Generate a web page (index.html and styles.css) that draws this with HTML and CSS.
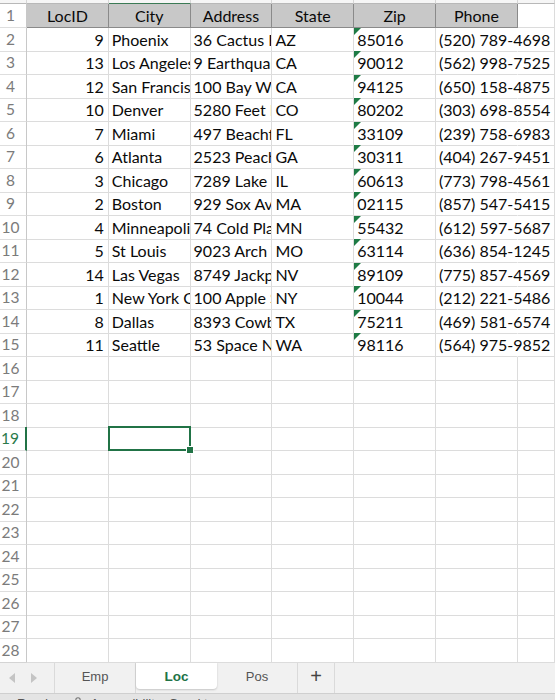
FILE: index.html
```html
<!DOCTYPE html>
<html>
<head>
<meta charset="utf-8">
<link rel="stylesheet" href="styles.css">
</head>
<body>
<div class="app">
  <div class="sheet">
    <div class="row strip">
      <div class="h"></div><div class="c"></div><div class="c sel-col"></div><div class="c"></div><div class="c"></div><div class="c"></div><div class="c"></div><div class="c"></div>
    </div>
    <div class="row hdr">
      <div class="h">1</div><div class="c">LocID</div><div class="c">City</div><div class="c">Address</div><div class="c">State</div><div class="c">Zip</div><div class="c">Phone</div><div class="c blank"></div>
    </div>
    <div class="row"><div class="h">2</div><div class="c n">9</div><div class="c">Phoenix</div><div class="c">36 Cactus Flower Rd</div><div class="c">AZ</div><div class="c z">85016</div><div class="c ovf">(520) 789-4698</div><div class="c"></div></div>
    <div class="row"><div class="h">3</div><div class="c n">13</div><div class="c">Los Angeles</div><div class="c">9 Earthquake Blvd</div><div class="c">CA</div><div class="c z">90012</div><div class="c ovf">(562) 998-7525</div><div class="c"></div></div>
    <div class="row"><div class="h">4</div><div class="c n">12</div><div class="c">San Francisco</div><div class="c">100 Bay Way</div><div class="c">CA</div><div class="c z">94125</div><div class="c ovf">(650) 158-4875</div><div class="c"></div></div>
    <div class="row"><div class="h">5</div><div class="c n">10</div><div class="c">Denver</div><div class="c">5280 Feet High St</div><div class="c">CO</div><div class="c z">80202</div><div class="c ovf">(303) 698-8554</div><div class="c"></div></div>
    <div class="row"><div class="h">6</div><div class="c n">7</div><div class="c">Miami</div><div class="c">497 Beachfront Ave</div><div class="c">FL</div><div class="c z">33109</div><div class="c ovf">(239) 758-6983</div><div class="c"></div></div>
    <div class="row"><div class="h">7</div><div class="c n">6</div><div class="c">Atlanta</div><div class="c">2523 Peachtree St</div><div class="c">GA</div><div class="c z">30311</div><div class="c ovf">(404) 267-9451</div><div class="c"></div></div>
    <div class="row"><div class="h">8</div><div class="c n">3</div><div class="c">Chicago</div><div class="c">7289 Lake Shore Dr</div><div class="c">IL</div><div class="c z">60613</div><div class="c ovf">(773) 798-4561</div><div class="c"></div></div>
    <div class="row"><div class="h">9</div><div class="c n">2</div><div class="c">Boston</div><div class="c">929 Sox Ave</div><div class="c">MA</div><div class="c z">02115</div><div class="c ovf">(857) 547-5415</div><div class="c"></div></div>
    <div class="row"><div class="h">10</div><div class="c n">4</div><div class="c">Minneapolis</div><div class="c">74 Cold Plains Rd</div><div class="c">MN</div><div class="c z">55432</div><div class="c ovf">(612) 597-5687</div><div class="c"></div></div>
    <div class="row"><div class="h">11</div><div class="c n">5</div><div class="c">St Louis</div><div class="c">9023 Arch Way</div><div class="c">MO</div><div class="c z">63114</div><div class="c ovf">(636) 854-1245</div><div class="c"></div></div>
    <div class="row"><div class="h">12</div><div class="c n">14</div><div class="c">Las Vegas</div><div class="c">8749 Jackpot Ln</div><div class="c">NV</div><div class="c z">89109</div><div class="c ovf">(775) 857-4569</div><div class="c"></div></div>
    <div class="row"><div class="h">13</div><div class="c n">1</div><div class="c">New York City</div><div class="c">100 Apple St</div><div class="c">NY</div><div class="c z">10044</div><div class="c ovf">(212) 221-5486</div><div class="c"></div></div>
    <div class="row"><div class="h">14</div><div class="c n">8</div><div class="c">Dallas</div><div class="c">8393 Cowboy Rd</div><div class="c">TX</div><div class="c z">75211</div><div class="c ovf">(469) 581-6574</div><div class="c"></div></div>
    <div class="row"><div class="h">15</div><div class="c n">11</div><div class="c">Seattle</div><div class="c">53 Space Needle Way</div><div class="c">WA</div><div class="c z">98116</div><div class="c ovf">(564) 975-9852</div><div class="c"></div></div>
    <div class="row"><div class="h">16</div><div class="c"></div><div class="c"></div><div class="c"></div><div class="c"></div><div class="c"></div><div class="c"></div><div class="c"></div></div>
    <div class="row"><div class="h">17</div><div class="c"></div><div class="c"></div><div class="c"></div><div class="c"></div><div class="c"></div><div class="c"></div><div class="c"></div></div>
    <div class="row"><div class="h">18</div><div class="c"></div><div class="c"></div><div class="c"></div><div class="c"></div><div class="c"></div><div class="c"></div><div class="c"></div></div>
    <div class="row"><div class="h sel-row">19</div><div class="c"></div><div class="c active"></div><div class="c"></div><div class="c"></div><div class="c"></div><div class="c"></div><div class="c"></div></div>
    <div class="row"><div class="h">20</div><div class="c"></div><div class="c"></div><div class="c"></div><div class="c"></div><div class="c"></div><div class="c"></div><div class="c"></div></div>
    <div class="row"><div class="h">21</div><div class="c"></div><div class="c"></div><div class="c"></div><div class="c"></div><div class="c"></div><div class="c"></div><div class="c"></div></div>
    <div class="row"><div class="h">22</div><div class="c"></div><div class="c"></div><div class="c"></div><div class="c"></div><div class="c"></div><div class="c"></div><div class="c"></div></div>
    <div class="row"><div class="h">23</div><div class="c"></div><div class="c"></div><div class="c"></div><div class="c"></div><div class="c"></div><div class="c"></div><div class="c"></div></div>
    <div class="row"><div class="h">24</div><div class="c"></div><div class="c"></div><div class="c"></div><div class="c"></div><div class="c"></div><div class="c"></div><div class="c"></div></div>
    <div class="row"><div class="h">25</div><div class="c"></div><div class="c"></div><div class="c"></div><div class="c"></div><div class="c"></div><div class="c"></div><div class="c"></div></div>
    <div class="row"><div class="h">26</div><div class="c"></div><div class="c"></div><div class="c"></div><div class="c"></div><div class="c"></div><div class="c"></div><div class="c"></div></div>
    <div class="row"><div class="h">27</div><div class="c"></div><div class="c"></div><div class="c"></div><div class="c"></div><div class="c"></div><div class="c"></div><div class="c"></div></div>
    <div class="row"><div class="h">28</div><div class="c"></div><div class="c"></div><div class="c"></div><div class="c"></div><div class="c"></div><div class="c"></div><div class="c"></div></div>
  </div>
  <div class="tabbar">
    <div class="navs">
      <svg width="10" height="12" viewBox="0 0 10 12"><path d="M8 1 L2 6 L8 11 Z" fill="#c4c4c4"/></svg>
      <svg width="10" height="12" viewBox="0 0 10 12"><path d="M2 1 L8 6 L2 11 Z" fill="#c4c4c4"/></svg>
    </div>
    <div class="tab">Emp</div>
    <div class="tab on">Loc</div>
    <div class="tab">Pos</div>
    <div class="tab add">+</div>
    <div class="rest"></div>
  </div>
  <div class="status">
    <span class="st">Ready</span>
    <svg class="acc" width="14" height="12" viewBox="0 0 14 12"><circle cx="7" cy="4" r="2.2" fill="none" stroke="#777" stroke-width="1.1"/><path d="M2 7 H12" stroke="#777" stroke-width="1.1"/></svg>
    <span class="st">Accessibility: Good to go</span>
  </div>
</div>
</body>
</html>
```

FILE: styles.css
```css
* { box-sizing: border-box; }
html, body { margin: 0; padding: 0; }
body {
  width: 555px;
  height: 700px;
  overflow: hidden;
  background: #fff;
  font-family: Lato, "Open Sans", sans-serif;
}
.app { display: flex; flex-direction: column; height: 700px; }
.sheet { display: flex; flex-direction: column; height: 662px; flex: none; }
.row {
  display: grid;
  grid-template-columns: 27px repeat(6, 81.8px) 1fr;
  height: 23.5px;
  flex: none;
  font-size: 16px;
  line-height: 23px;
  color: #0a0a0a;
}
.row.strip { height: 4px; background: #f6f6f6; }
.strip .h, .strip .c { border-bottom: 1px solid #b8b8b8; border-right: 1px solid #d6d6d6; }
.strip .sel-col { border-bottom: 1px solid #3b7a55; }
.h {
  border-right: 1px solid #c8c8c8;
  border-bottom: 1px solid #dedede;
  color: #7b7b7b;
  text-align: center;
  padding-right: 5px;
  font-size: 15.5px;
}
.h.sel-row { color: #2a7a4b; border-right: 2px solid #217346; }
.c {
  position: relative;
  border-right: 1px solid #dcdcdc;
  border-bottom: 1px solid #dcdcdc;
  padding: 0 3px;
  white-space: nowrap;
  overflow: hidden;
}
.c.n { text-align: right; padding-right: 4px; }
.c.ovf { overflow: visible; border-right-color: transparent; z-index: 1; }
.c.z { padding-left: 3px; }
.c.z::before {
  content: "";
  position: absolute;
  left: 0;
  top: 0;
  width: 0;
  height: 0;
  border-top: 7px solid #1e7b45;
  border-right: 7px solid transparent;
}
.hdr .c {
  background: #c8c8c8;
  border-right: 1px solid #8a8a8a;
  border-bottom: 1px solid #8a8a8a;
  text-align: center;
}
.hdr .c.blank { background: #fff; border-right: 1px solid #dcdcdc; border-bottom: 1px solid #dcdcdc; }
.hdr .h { border-bottom-color: #dedede; }
.c.active { overflow: visible; }
.c.active::after {
  content: "";
  position: absolute;
  left: -1px;
  top: -1px;
  right: -1px;
  bottom: -1px;
  border: 2px solid #217346;
}
.c.active::before {
  content: "";
  position: absolute;
  right: -4px;
  bottom: -4px;
  width: 6px;
  height: 6px;
  background: #217346;
  border: 1px solid #fff;
  z-index: 2;
}
.tabbar {
  display: flex;
  height: 32px;
  flex: none;
  background: #f1f1f1;
  border-top: 1px solid #d4d4d4;
  border-bottom: 1px solid #cfcfcf;
  font-family: "Liberation Sans", Arial, sans-serif;
  font-size: 13px;
  color: #555;
}
.navs {
  width: 55px;
  display: flex;
  align-items: center;
  gap: 12px;
  padding-left: 7px;
  border-right: 1px solid #dadada;
}
.tab {
  width: 81px;
  display: flex;
  align-items: center;
  justify-content: center;
  padding-bottom: 3px;
  border-right: 1px solid #dadada;
}
.tab.on {
  background: #fff;
  color: #217346;
  font-weight: bold;
  font-size: 13.5px;
  margin-top: -1px;
  margin-bottom: 4px;
  border-radius: 0 0 4px 4px;
  box-shadow: 0 1px 2px rgba(0,0,0,0.18);
  border-right: none;
  padding-top: 2px;
  padding-bottom: 0;
}
.tab.add { width: 37px; font-size: 20px; color: #444; padding-bottom: 4px; }
.rest { flex: 1; }
.status {
  flex: none;
  height: 20px;
  background: #e4e4e4;
  display: flex;
  align-items: flex-start;
  gap: 6px;
  padding-left: 17px;
  padding-top: 2px;
  font-family: "Liberation Sans", Arial, sans-serif;
  font-size: 13px;
  line-height: 15px;
  color: #555;
}
.status .st:first-child { margin-right: 10px; }
```
